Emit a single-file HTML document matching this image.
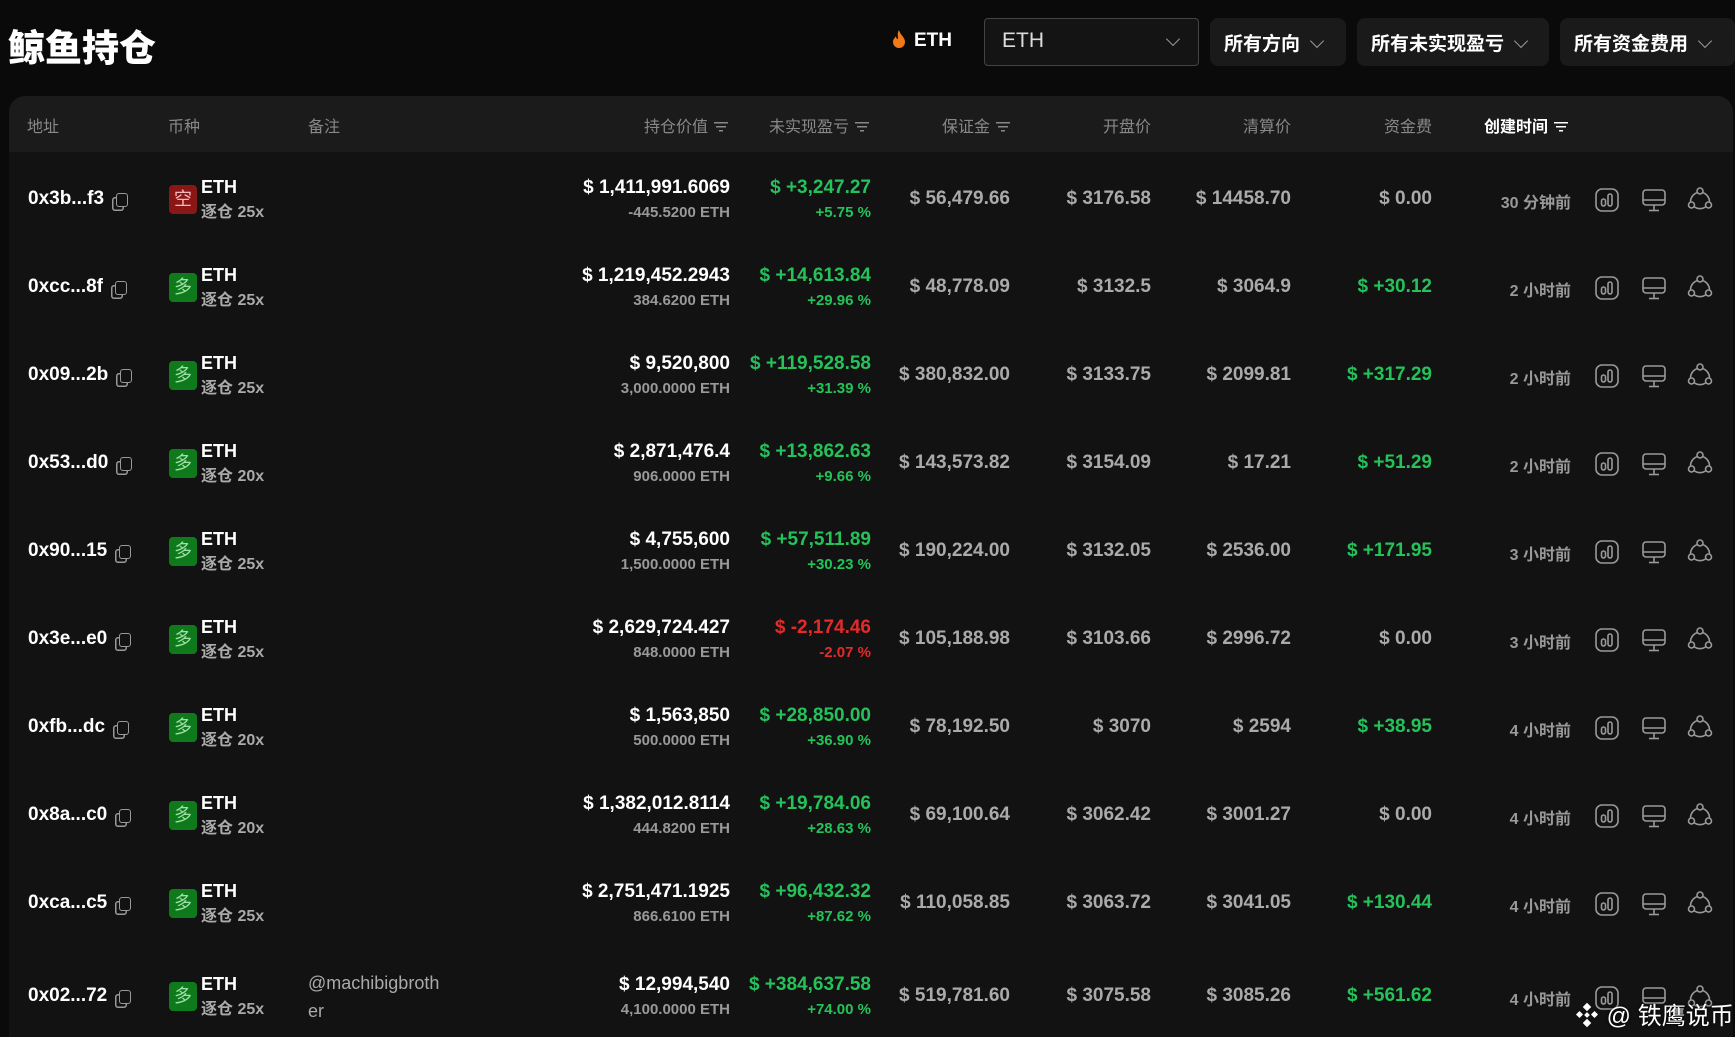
<!DOCTYPE html>
<html style="overflow:hidden;height:1037px"><head><meta charset="utf-8"><style>
*{margin:0;padding:0;box-sizing:border-box}
body{width:1735px;height:1037px;background:#0a0a0a;font-family:"Liberation Sans","Noto Sans CJK SC",sans-serif;color:#fff;position:relative;overflow:hidden}
.title{position:absolute;left:8px;top:18px;font-size:37px;font-weight:900;letter-spacing:0px}
.eth{position:absolute;left:892px;top:29px;font-size:19px;font-weight:700}
.sel{position:absolute;left:984px;top:18px;width:215px;height:48px;border:1px solid #444;border-radius:4px;background:#141414;font-size:21px;color:#ddd;padding:10px 17px}
.btn{position:absolute;top:18px;height:48px;background:#1a1a1a;border-radius:8px;font-size:19px;font-weight:700;padding:11px 14px}
.chev{display:inline-block;width:10px;height:10px;border-right:1.5px solid #999;border-bottom:1.5px solid #999;transform:rotate(45deg);margin-left:12px;position:relative;top:-4px}
.panel{position:absolute;left:9px;top:96px;width:1724px;height:941px;background:#121212;border-radius:16px 16px 0 0;overflow:hidden}
.head{position:absolute;left:0;top:0;width:100%;height:56px;background:#1b1b1b}
.h{position:absolute;top:17px;font-size:16px;color:#888;white-space:nowrap}
.f{display:inline-block;width:14px;height:10px;margin-left:6px;position:relative;top:0;background:linear-gradient(#888,#888) 0 0/14px 1.5px no-repeat,linear-gradient(#888,#888) 2px 4px/10px 1.5px no-repeat,linear-gradient(#888,#888) 5px 8px/4px 1.5px no-repeat}
.fw{background:linear-gradient(#fff,#fff) 0 0/14px 1.5px no-repeat,linear-gradient(#fff,#fff) 2px 4px/10px 1.5px no-repeat,linear-gradient(#fff,#fff) 5px 8px/4px 1.5px no-repeat}
.row{position:absolute;left:0;width:100%;height:88px}
.c{position:absolute;white-space:nowrap}
.addr{left:19px;top:34px;font-size:19px;font-weight:700}
.cp{display:inline-block;width:12px;height:14px;border:1.5px solid #999;border-radius:3px;margin-left:12px;position:relative;top:3px;box-shadow:-4px 4px 0 -1.5px #121212,-4px 4px 0 0 #999}
.bd{left:160px;top:31px;width:28px;height:29px;border-radius:4px;font-size:18px;text-align:center;line-height:29px;color:#9fe0a4;background:#0e7a1c}
.red{background:#8b1616;color:#f3b8b8}
.coin{left:192px;top:21px;font-size:18px;font-weight:700;line-height:25px}
.coin span{display:block;color:#aaa;font-size:16px}
.v{right:1003px;top:21px;text-align:right;font-size:19px;font-weight:700;line-height:25px}
.v span,.p span{display:block;font-size:15px;color:#999;font-weight:600}
.p{right:862px;top:21px;text-align:right;font-size:19px;font-weight:600;line-height:25px;color:#25c25a}
.p span{color:#25c25a}
.p.neg,.p.neg span{color:#e52a2a}
.m{top:34px;font-size:19px;color:#aaa;font-weight:600;text-align:right}
.g{color:#25c25a}
.t{right:162px;top:35px;font-size:16px;color:#999;font-weight:700}
</style></head><body>
<div class="title">鲸鱼持仓</div>
<div class="eth"><svg width="14" height="20" viewBox="0 0 14 20" style="vertical-align:-3px;margin-right:8px"><path d="M7 1C8 6 13 8 13 13a6 6 0 0 1-12 0c0-3 2-4 3-6 0 2 1 3 2 3C6 7 5 4 7 1z" fill="#f07a1a"/></svg>ETH</div>
<div class="sel">ETH<span class="chev" style="position:absolute;right:20px;top:15px"></span></div>
<div class="btn" style="left:1210px;width:136px">所有方向<span class="chev"></span></div>
<div class="btn" style="left:1357px;width:192px">所有未实现盈亏<span class="chev"></span></div>
<div class="btn" style="left:1560px;width:175px">所有资金费用<span class="chev"></span></div>
<div class="panel">
<div class="head">
<div class="h" style="left:18px">地址</div>
<div class="h" style="left:159px">币种</div>
<div class="h" style="left:299px">备注</div>
<div class="h" style="right:1005px">持仓价值<i class="f"></i></div>
<div class="h" style="right:864px">未实现盈亏<i class="f"></i></div>
<div class="h" style="right:723px">保证金<i class="f"></i></div>
<div class="h" style="right:582px">开盘价</div>
<div class="h" style="right:442px">清算价</div>
<div class="h" style="right:301px">资金费</div>
<div class="h" style="left:1475px;color:#fff;font-weight:700">创建时间<i class="f fw"></i></div>
</div>

<div class="row" style="top:58px">
<div class="c addr">0x3b...f3<i class="cp"></i></div><div class="c bd red">空</div>
<div class="c coin">ETH<span>逐仓 25x</span></div>
<div class="c v">$ 1,411,991.6069<span>-445.5200 ETH</span></div>
<div class="c p">$ +3,247.27<span>+5.75 %</span></div>
<div class="c m" style="right:723px">$ 56,479.66</div><div class="c m" style="right:582px">$ 3176.58</div><div class="c m" style="right:442px">$ 14458.70</div><div class="c m" style="right:301px">$ 0.00</div>
<div class="c t">30 分钟前</div>
</div>
<div class="row" style="top:146px">
<div class="c addr">0xcc...8f<i class="cp"></i></div><div class="c bd">多</div>
<div class="c coin">ETH<span>逐仓 25x</span></div>
<div class="c v">$ 1,219,452.2943<span>384.6200 ETH</span></div>
<div class="c p">$ +14,613.84<span>+29.96 %</span></div>
<div class="c m" style="right:723px">$ 48,778.09</div><div class="c m" style="right:582px">$ 3132.5</div><div class="c m" style="right:442px">$ 3064.9</div><div class="c m g" style="right:301px">$ +30.12</div>
<div class="c t">2 小时前</div>
</div>
<div class="row" style="top:234px">
<div class="c addr">0x09...2b<i class="cp"></i></div><div class="c bd">多</div>
<div class="c coin">ETH<span>逐仓 25x</span></div>
<div class="c v">$ 9,520,800<span>3,000.0000 ETH</span></div>
<div class="c p">$ +119,528.58<span>+31.39 %</span></div>
<div class="c m" style="right:723px">$ 380,832.00</div><div class="c m" style="right:582px">$ 3133.75</div><div class="c m" style="right:442px">$ 2099.81</div><div class="c m g" style="right:301px">$ +317.29</div>
<div class="c t">2 小时前</div>
</div>
<div class="row" style="top:322px">
<div class="c addr">0x53...d0<i class="cp"></i></div><div class="c bd">多</div>
<div class="c coin">ETH<span>逐仓 20x</span></div>
<div class="c v">$ 2,871,476.4<span>906.0000 ETH</span></div>
<div class="c p">$ +13,862.63<span>+9.66 %</span></div>
<div class="c m" style="right:723px">$ 143,573.82</div><div class="c m" style="right:582px">$ 3154.09</div><div class="c m" style="right:442px">$ 17.21</div><div class="c m g" style="right:301px">$ +51.29</div>
<div class="c t">2 小时前</div>
</div>
<div class="row" style="top:410px">
<div class="c addr">0x90...15<i class="cp"></i></div><div class="c bd">多</div>
<div class="c coin">ETH<span>逐仓 25x</span></div>
<div class="c v">$ 4,755,600<span>1,500.0000 ETH</span></div>
<div class="c p">$ +57,511.89<span>+30.23 %</span></div>
<div class="c m" style="right:723px">$ 190,224.00</div><div class="c m" style="right:582px">$ 3132.05</div><div class="c m" style="right:442px">$ 2536.00</div><div class="c m g" style="right:301px">$ +171.95</div>
<div class="c t">3 小时前</div>
</div>
<div class="row" style="top:498px">
<div class="c addr">0x3e...e0<i class="cp"></i></div><div class="c bd">多</div>
<div class="c coin">ETH<span>逐仓 25x</span></div>
<div class="c v">$ 2,629,724.427<span>848.0000 ETH</span></div>
<div class="c p neg">$ -2,174.46<span>-2.07 %</span></div>
<div class="c m" style="right:723px">$ 105,188.98</div><div class="c m" style="right:582px">$ 3103.66</div><div class="c m" style="right:442px">$ 2996.72</div><div class="c m" style="right:301px">$ 0.00</div>
<div class="c t">3 小时前</div>
</div>
<div class="row" style="top:586px">
<div class="c addr">0xfb...dc<i class="cp"></i></div><div class="c bd">多</div>
<div class="c coin">ETH<span>逐仓 20x</span></div>
<div class="c v">$ 1,563,850<span>500.0000 ETH</span></div>
<div class="c p">$ +28,850.00<span>+36.90 %</span></div>
<div class="c m" style="right:723px">$ 78,192.50</div><div class="c m" style="right:582px">$ 3070</div><div class="c m" style="right:442px">$ 2594</div><div class="c m g" style="right:301px">$ +38.95</div>
<div class="c t">4 小时前</div>
</div>
<div class="row" style="top:674px">
<div class="c addr">0x8a...c0<i class="cp"></i></div><div class="c bd">多</div>
<div class="c coin">ETH<span>逐仓 20x</span></div>
<div class="c v">$ 1,382,012.8114<span>444.8200 ETH</span></div>
<div class="c p">$ +19,784.06<span>+28.63 %</span></div>
<div class="c m" style="right:723px">$ 69,100.64</div><div class="c m" style="right:582px">$ 3062.42</div><div class="c m" style="right:442px">$ 3001.27</div><div class="c m" style="right:301px">$ 0.00</div>
<div class="c t">4 小时前</div>
</div>
<div class="row" style="top:762px">
<div class="c addr">0xca...c5<i class="cp"></i></div><div class="c bd">多</div>
<div class="c coin">ETH<span>逐仓 25x</span></div>
<div class="c v">$ 2,751,471.1925<span>866.6100 ETH</span></div>
<div class="c p">$ +96,432.32<span>+87.62 %</span></div>
<div class="c m" style="right:723px">$ 110,058.85</div><div class="c m" style="right:582px">$ 3063.72</div><div class="c m" style="right:442px">$ 3041.05</div><div class="c m g" style="right:301px">$ +130.44</div>
<div class="c t">4 小时前</div>
</div>
<div class="row" style="top:855px">
<div class="c addr">0x02...72<i class="cp"></i></div><div class="c bd">多</div>
<div class="c coin">ETH<span>逐仓 25x</span></div>
<div class="c" style="left:299px;top:18px;font-size:18px;color:#aaa;line-height:28px">@machibigbroth<br>er</div>
<div class="c v">$ 12,994,540<span>4,100.0000 ETH</span></div>
<div class="c p">$ +384,637.58<span>+74.00 %</span></div>
<div class="c m" style="right:723px">$ 519,781.60</div><div class="c m" style="right:582px">$ 3075.58</div><div class="c m" style="right:442px">$ 3085.26</div><div class="c m g" style="right:301px">$ +561.62</div>
<div class="c t">4 小时前</div>
</div>
</div>

<svg width="0" height="0" style="position:absolute"><defs>
<g id="i1" fill="none" stroke="#999" stroke-width="1.6"><rect x="2" y="2" width="22" height="22" rx="6"/><rect x="7.5" y="12" width="4" height="7" rx="2"/><rect x="14" y="7" width="4" height="12" rx="2"/></g>
<g id="i2" fill="none" stroke="#999" stroke-width="1.6"><rect x="2" y="3" width="22" height="15" rx="3"/><line x1="2" y1="13" x2="24" y2="13"/><line x1="13" y1="18" x2="13" y2="23"/><line x1="8" y1="23.5" x2="18" y2="23.5"/></g>
<g id="i3" fill="none" stroke="#999" stroke-width="1.6"><circle cx="13" cy="4" r="3"/><circle cx="4.5" cy="18" r="3"/><circle cx="21.5" cy="18" r="3"/><path d="M10.5 5.5A10 10 0 0 0 3.5 14.8M15.5 5.5A10 10 0 0 1 22.5 14.8M7.5 20A10 10 0 0 0 18.5 20"/></g>
</defs></svg>
<style>.ico{position:absolute;width:26px;height:26px}</style>
<svg class="ico" style="left:1594px;top:187px"><use href="#i1"/></svg><svg class="ico" style="left:1641px;top:187px"><use href="#i2"/></svg><svg class="ico" style="left:1687px;top:187px"><use href="#i3"/></svg>
<svg class="ico" style="left:1594px;top:275px"><use href="#i1"/></svg><svg class="ico" style="left:1641px;top:275px"><use href="#i2"/></svg><svg class="ico" style="left:1687px;top:275px"><use href="#i3"/></svg>
<svg class="ico" style="left:1594px;top:363px"><use href="#i1"/></svg><svg class="ico" style="left:1641px;top:363px"><use href="#i2"/></svg><svg class="ico" style="left:1687px;top:363px"><use href="#i3"/></svg>
<svg class="ico" style="left:1594px;top:451px"><use href="#i1"/></svg><svg class="ico" style="left:1641px;top:451px"><use href="#i2"/></svg><svg class="ico" style="left:1687px;top:451px"><use href="#i3"/></svg>
<svg class="ico" style="left:1594px;top:539px"><use href="#i1"/></svg><svg class="ico" style="left:1641px;top:539px"><use href="#i2"/></svg><svg class="ico" style="left:1687px;top:539px"><use href="#i3"/></svg>
<svg class="ico" style="left:1594px;top:627px"><use href="#i1"/></svg><svg class="ico" style="left:1641px;top:627px"><use href="#i2"/></svg><svg class="ico" style="left:1687px;top:627px"><use href="#i3"/></svg>
<svg class="ico" style="left:1594px;top:715px"><use href="#i1"/></svg><svg class="ico" style="left:1641px;top:715px"><use href="#i2"/></svg><svg class="ico" style="left:1687px;top:715px"><use href="#i3"/></svg>
<svg class="ico" style="left:1594px;top:803px"><use href="#i1"/></svg><svg class="ico" style="left:1641px;top:803px"><use href="#i2"/></svg><svg class="ico" style="left:1687px;top:803px"><use href="#i3"/></svg>
<svg class="ico" style="left:1594px;top:891px"><use href="#i1"/></svg><svg class="ico" style="left:1641px;top:891px"><use href="#i2"/></svg><svg class="ico" style="left:1687px;top:891px"><use href="#i3"/></svg>
<svg class="ico" style="left:1594px;top:985px"><use href="#i1"/></svg><svg class="ico" style="left:1641px;top:985px"><use href="#i2"/></svg><svg class="ico" style="left:1687px;top:985px"><use href="#i3"/></svg>

<div style="position:absolute;left:1574px;top:996px;font-size:24px;color:#fff;white-space:nowrap;text-shadow:0 0 3px #000">
<svg width="26" height="26" viewBox="0 0 26 26" style="vertical-align:-4px"><g fill="#fff"><rect x="10" y="2" width="6" height="6" transform="rotate(45 13 5)"/><rect x="3" y="10" width="5" height="5" transform="rotate(45 5.5 12.5)"/><rect x="18" y="10" width="5" height="5" transform="rotate(45 20.5 12.5)"/><rect x="10" y="18" width="6" height="6" transform="rotate(45 13 21)"/><rect x="11" y="11" width="4" height="4" transform="rotate(45 13 13)"/></g></svg> @ 铁鹰说币</div>
</body></html>
